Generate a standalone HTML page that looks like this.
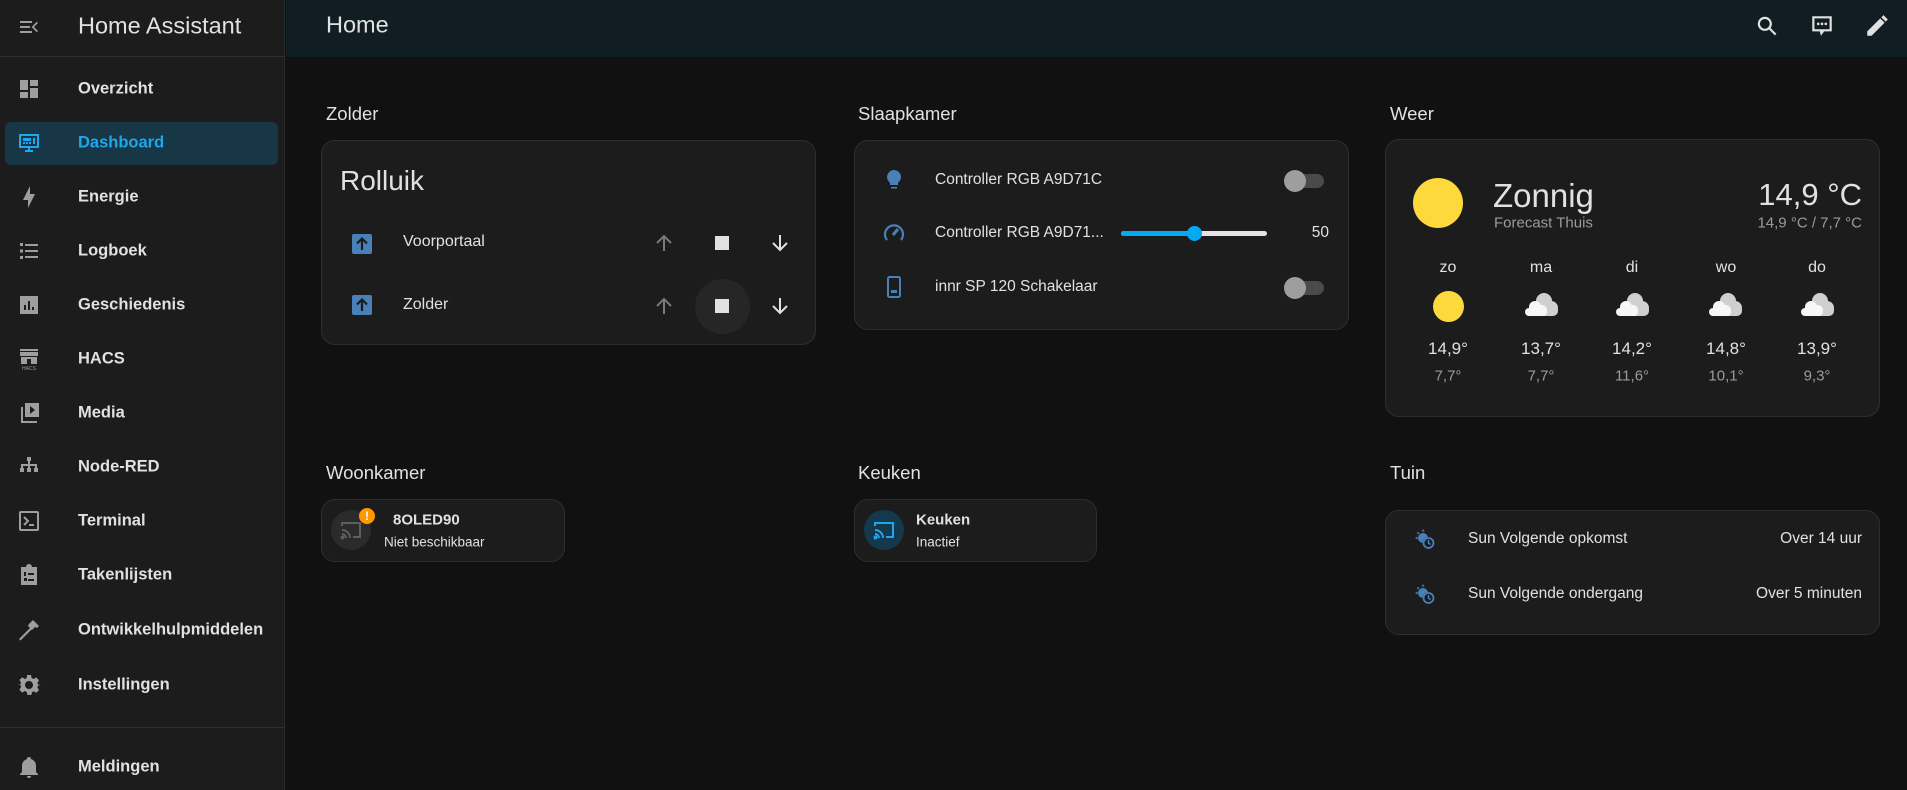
<!DOCTYPE html>
<html><head><meta charset="utf-8"><style>
*{box-sizing:border-box;margin:0;padding:0}
body{width:1907px;height:790px;background:#111;font-family:"Liberation Sans",sans-serif;color:#e1e1e1;position:relative;overflow:hidden}
.a{position:absolute}
.sb{left:0;top:0;width:285px;height:790px;background:#1c1c1c;border-right:1px solid #2a2a2a}
.nav{position:absolute;left:78px;font-size:16.5px;font-weight:bold;color:#e1e1e1;transform:translateY(-50%)}
.ni{position:absolute;left:17px;width:24px;height:24px;transform:translateY(-50%)}
.card{position:absolute;background:#1c1c1c;border:1px solid #2e2e2e;border-radius:14px}
.h{position:absolute;font-size:18.5px;color:#e1e1e1;transform:translateY(-50%)}
.t{position:absolute;transform:translateY(-50%);white-space:nowrap}
.c{transform:translate(-50%,-50%)}
</style></head><body>
<svg width="0" height="0" style="position:absolute"><defs><g id="cl"><circle cx="22" cy="11" r="8" fill="#cfcfcf"/><circle cx="29" cy="18" r="7" fill="#cfcfcf"/><rect x="14" y="15" width="22" height="11" rx="5" fill="#cfcfcf"/><circle cx="13" cy="17" r="6" fill="#f7f7f7"/><circle cx="20" cy="20" r="5" fill="#f7f7f7"/><rect x="3" y="18" width="22" height="8" rx="4" fill="#f7f7f7"/></g></defs></svg>
<div class="a sb"></div>
<div class="a" style="left:0;top:56px;width:285px;height:1px;background:#2f2f2f"></div>
<svg class="a" style="left:17px;top:15px" width="24" height="24" viewBox="0 0 24 24" fill="#9e9e9e"><path d="M3 6h12v2H3zM3 11h10v2H3zM3 16h12v2H3zM21 8l-4 4 4 4-1.2 1.2L14.6 12l5.2-5.2z"/></svg>
<div class="t" style="left:78px;top:26px;font-size:23.5px">Home Assistant</div>

<div class="a" style="left:5px;top:122px;width:273px;height:43px;background:#173646;border-radius:6px"></div>
<svg class="ni" style="top:89px" viewBox="0 0 24 24" fill="#9e9e9e"><path d="M3 3h8v10H3zM13 3h8v6h-8zM13 11h8v10h-8zM3 15h8v6H3z"/></svg>
<div class="nav" style="top:89px">Overzicht</div>
<svg class="ni" style="top:143px" viewBox="0 0 24 24" fill="#1ea6ee"><path d="M2 3h20v14H13v2h3v2H8v-2h3v-2H2zM4 5v10h16V5zM6 7h8v3H6zM16 7h2v6h-2zM6 11h2v2H6zM9 11h2v2H9zM12 11h2v2h-2z"/></svg>
<div class="nav" style="top:143px;color:#1ea6ee">Dashboard</div>
<svg class="ni" style="top:197px" viewBox="0 0 24 24" fill="#9e9e9e"><path d="M11 15H6l7-14v8h5l-7 14z"/></svg>
<div class="nav" style="top:197px">Energie</div>
<svg class="ni" style="top:251px" viewBox="0 0 24 24" fill="#9e9e9e"><path d="M3 4h3v3H3zM8 5h13v2H8zM3 10.5h3v3H3zM8 11h13v2H8zM3 17h3v3H3zM8 17h13v2H8z"/></svg>
<div class="nav" style="top:251px">Logboek</div>
<svg class="ni" style="top:305px" viewBox="0 0 24 24" fill="#9e9e9e"><path d="M3 3h18v18H3zM7 12v5h2v-5zM11 8v9h2V8zM15 14v3h2v-3z"/></svg>
<div class="nav" style="top:305px">Geschiedenis</div>
<svg class="ni" style="top:359px" viewBox="0 0 24 24" fill="#9e9e9e"><path d="M3 2h18v2H3zM3 5h18v4H3zM4 10h16v7h-6v-5h-4v5H4z"/><text x="12" y="23" font-size="5" text-anchor="middle" fill="#9e9e9e" font-family="Liberation Sans">HACS</text></svg>
<div class="nav" style="top:359px">HACS</div>
<svg class="ni" style="top:413px" viewBox="0 0 24 24" fill="#9e9e9e"><path d="M8 2h14v14H8zM13 5v8l5-4zM4 6h2v14h14v2H4z"/></svg>
<div class="nav" style="top:413px">Media</div>
<svg class="ni" style="top:467px" viewBox="0 0 24 24" fill="#9e9e9e"><path d="M10 2h4v4h-1v3h7v4h1v4h-4v-4h1v-2h-5v2h1v4h-4v-4h1v-2H6v2h1v4H3v-4h1V9h7V6h-1z"/></svg>
<div class="nav" style="top:467px">Node-RED</div>
<svg class="ni" style="top:521px" viewBox="0 0 24 24" fill="none" stroke="#9e9e9e" stroke-width="2"><rect x="3" y="3" width="18" height="18" rx="1"/><path d="M7 8l4 4-4 4M12 16h5"/></svg>
<div class="nav" style="top:521px">Terminal</div>
<svg class="ni" style="top:575px" viewBox="0 0 24 24" fill="#9e9e9e"><path d="M4 4h5a3 3 0 0 1 6 0h5v18H4z"/><path fill="#1c1c1c" d="M7 9h2v4H7zM11 10h6v2h-6zM7 15h3v3H7zM11 16h6v2h-6z"/></svg>
<div class="nav" style="top:575px">Takenlijsten</div>
<svg class="ni" style="top:630px" viewBox="0 0 24 24" fill="#9e9e9e"><path d="M2 21l11-11 1.5 1.5L3.5 22.5zM12 6l4-4 6 6-2 2-2-1-3 3-4-4z"/></svg>
<div class="nav" style="top:630px">Ontwikkelhulpmiddelen</div>
<svg class="ni" style="top:685px" viewBox="0 0 24 24" fill="#9e9e9e"><path d="M12 8a4 4 0 1 0 0 8 4 4 0 0 0 0-8zM10 2h4l.6 3 2 1 2.6-1.6 2.8 2.8L20.4 10l.6 1.5 3 .5v0l-3 .5-.6 2 1.6 2.6-2.8 2.8L17 18.4l-2 .6-.6 3h-4l-.6-3-2-1-2.6 1.6-2.8-2.8L4 14l-.6-2L0 12l3.4-.5.6-2L2.4 7 5.2 4.2 7.8 6l2-1z"/></svg>
<div class="nav" style="top:685px">Instellingen</div>
<div class="a" style="left:0;top:727px;width:285px;height:1px;background:#2f2f2f"></div>
<svg class="ni" style="top:767px" viewBox="0 0 24 24" fill="#9e9e9e"><path d="M12 2a2 2 0 0 1 2 2 7 7 0 0 1 5 7v6l2 2v1H3v-1l2-2v-6a7 7 0 0 1 5-7 2 2 0 0 1 2-2zM10 21h4a2 2 0 0 1-4 0z"/></svg>
<div class="nav" style="top:767px">Meldingen</div>

<!-- header -->
<div class="a" style="left:286px;top:0;width:1621px;height:57px;background:#101e24"></div>
<div class="t" style="left:326px;top:25px;font-size:23.5px">Home</div>
<svg class="a" style="left:1754px;top:13px" width="26" height="26" viewBox="0 0 24 24" fill="none" stroke="#e1e1e1" stroke-width="2"><circle cx="10" cy="10" r="5.5"/><path d="M14 14l6 6"/></svg>
<svg class="a" style="left:1809px;top:13px" width="26" height="26" viewBox="0 0 24 24" fill="#e1e1e1"><path d="M3 3h18v14h-7l-3 4-1-4H3zM5 5v10h14V5z"/><circle cx="8.5" cy="10" r="1.2"/><circle cx="12" cy="10" r="1.2"/><circle cx="15.5" cy="10" r="1.2"/></svg>
<svg class="a" style="left:1864px;top:13px" width="26" height="26" viewBox="0 0 24 24" fill="#e1e1e1"><path d="M3 21v-4L15 5l4 4L7 21zM16 4l2-2 4 4-2 2z"/></svg>

<!-- section titles -->
<div class="h" style="left:326px;top:114px">Zolder</div>
<div class="h" style="left:858px;top:114px">Slaapkamer</div>
<div class="h" style="left:1390px;top:114px">Weer</div>
<div class="h" style="left:326px;top:473px">Woonkamer</div>
<div class="h" style="left:858px;top:473px">Keuken</div>
<div class="h" style="left:1390px;top:473px">Tuin</div>

<!-- Zolder -->
<div class="card" style="left:321px;top:140px;width:495px;height:205px"></div>
<div class="t" style="left:340px;top:181px;font-size:28px">Rolluik</div>
<svg class="a" style="left:351px;top:233px" width="22" height="22" viewBox="0 0 22 22"><rect x="1" y="1" width="20" height="20" rx="2" fill="#4a80b8"/><path d="M11 17V6M6 10.5L11 5.5l5 5" stroke="#1c1c1c" stroke-width="2.2" fill="none"/></svg>
<svg class="a" style="left:351px;top:294px" width="22" height="22" viewBox="0 0 22 22"><rect x="1" y="1" width="20" height="20" rx="2" fill="#4a80b8"/><path d="M11 17V6M6 10.5L11 5.5l5 5" stroke="#1c1c1c" stroke-width="2.2" fill="none"/></svg>
<div class="t" style="left:403px;top:242px;font-size:16px">Voorportaal</div>
<div class="t" style="left:403px;top:305px;font-size:16px">Zolder</div>
<div class="a" style="left:695px;top:279px;width:55px;height:55px;border-radius:50%;background:#262626"></div>
<svg class="a" style="left:652px;top:232px" width="140" height="22" viewBox="0 0 140 22"><path d="M12 19V4M5 11l7-7 7 7" stroke="#7a7a7a" stroke-width="2" fill="none"/><rect x="63" y="4" width="14" height="14" fill="#e1e1e1"/><path d="M128 3v15M121 11l7 7 7-7" stroke="#e1e1e1" stroke-width="2" fill="none"/></svg>
<svg class="a" style="left:652px;top:295px" width="140" height="22" viewBox="0 0 140 22"><path d="M12 19V4M5 11l7-7 7 7" stroke="#7a7a7a" stroke-width="2" fill="none"/><rect x="63" y="4" width="14" height="14" fill="#e1e1e1"/><path d="M128 3v15M121 11l7 7 7-7" stroke="#e1e1e1" stroke-width="2" fill="none"/></svg>

<!-- Slaapkamer -->
<div class="card" style="left:854px;top:140px;width:495px;height:190px"></div>
<svg class="a" style="left:882px;top:168px" width="24" height="24" viewBox="0 0 24 24" fill="#4a80b8"><path d="M12 2a7 7 0 0 1 4 12.7V17H8v-2.3A7 7 0 0 1 12 2zM9 19h6v1.5H9z"/></svg>
<svg class="a" style="left:882px;top:221px" width="24" height="24" viewBox="0 0 24 24" fill="none" stroke="#4a80b8" stroke-width="2.2"><path d="M5 19A9 9 0 1 1 19 19"/><path d="M11 14l5-6" stroke-width="3"/></svg>
<svg class="a" style="left:882px;top:275px" width="24" height="24" viewBox="0 0 24 24"><rect x="6" y="2" width="12" height="20" rx="1.5" fill="none" stroke="#4a80b8" stroke-width="2"/><rect x="9" y="15" width="6" height="3" fill="#4a80b8"/></svg>
<div class="t" style="left:935px;top:180px;font-size:15.5px">Controller RGB A9D71C</div>
<div class="t" style="left:935px;top:233px;font-size:15.5px">Controller RGB A9D71...</div>
<div class="t" style="left:935px;top:287px;font-size:15.5px">innr SP 120 Schakelaar</div>
<div class="a" style="left:1290px;top:174px;width:34px;height:14px;border-radius:7px;background:#4a4a4a"></div>
<div class="a" style="left:1284px;top:170px;width:22px;height:22px;border-radius:50%;background:#9e9e9e"></div>
<div class="a" style="left:1290px;top:281px;width:34px;height:14px;border-radius:7px;background:#4a4a4a"></div>
<div class="a" style="left:1284px;top:277px;width:22px;height:22px;border-radius:50%;background:#9e9e9e"></div>
<div class="a" style="left:1121px;top:231px;width:146px;height:5px;border-radius:3px;background:#e6e1e6"></div>
<div class="a" style="left:1121px;top:231px;width:73px;height:5px;border-radius:3px;background:#03a9f4"></div>
<div class="a" style="left:1187px;top:226px;width:15px;height:15px;border-radius:50%;background:#03a9f4"></div>
<div class="t" style="right:578px;top:233px;font-size:15.5px">50</div>

<!-- Weer -->
<div class="card" style="left:1385px;top:139px;width:495px;height:278px"></div>
<div class="a" style="left:1413px;top:178px;width:50px;height:50px;border-radius:50%;background:#fdd93c"></div>
<div class="t" style="left:1493px;top:196px;font-size:33px">Zonnig</div>
<div class="t" style="left:1494px;top:223px;font-size:15px;color:#9b9b9b">Forecast Thuis</div>
<div class="t" style="right:45px;top:195px;font-size:31px">14,9 °C</div>
<div class="t" style="right:45px;top:223px;font-size:15px;color:#9b9b9b">14,9 °C / 7,7 °C</div>
<div class="t c" style="left:1448px;top:268px;font-size:16px">zo</div>
<div class="t c" style="left:1541px;top:268px;font-size:16px">ma</div>
<div class="t c" style="left:1632px;top:268px;font-size:16px">di</div>
<div class="t c" style="left:1726px;top:268px;font-size:16px">wo</div>
<div class="t c" style="left:1817px;top:268px;font-size:16px">do</div>
<div class="a" style="left:1433px;top:291px;width:31px;height:31px;border-radius:50%;background:#fdd93c"></div>
<svg class="a" style="left:1522px;top:290px" width="38" height="28" viewBox="0 0 38 28"><use href="#cl"/></svg>
<svg class="a" style="left:1613px;top:290px" width="38" height="28" viewBox="0 0 38 28"><use href="#cl"/></svg>
<svg class="a" style="left:1706px;top:290px" width="38" height="28" viewBox="0 0 38 28"><use href="#cl"/></svg>
<svg class="a" style="left:1798px;top:290px" width="38" height="28" viewBox="0 0 38 28"><use href="#cl"/></svg>
<div class="t c" style="left:1448px;top:349px;font-size:17px">14,9°</div>
<div class="t c" style="left:1541px;top:349px;font-size:17px">13,7°</div>
<div class="t c" style="left:1632px;top:349px;font-size:17px">14,2°</div>
<div class="t c" style="left:1726px;top:349px;font-size:17px">14,8°</div>
<div class="t c" style="left:1817px;top:349px;font-size:17px">13,9°</div>
<div class="t c" style="left:1448px;top:376px;font-size:15px;color:#9b9b9b">7,7°</div>
<div class="t c" style="left:1541px;top:376px;font-size:15px;color:#9b9b9b">7,7°</div>
<div class="t c" style="left:1632px;top:376px;font-size:15px;color:#9b9b9b">11,6°</div>
<div class="t c" style="left:1726px;top:376px;font-size:15px;color:#9b9b9b">10,1°</div>
<div class="t c" style="left:1817px;top:376px;font-size:15px;color:#9b9b9b">9,3°</div>

<!-- Woonkamer -->
<div class="card" style="left:321px;top:499px;width:244px;height:63px"></div>
<div class="a" style="left:331px;top:510px;width:40px;height:40px;border-radius:50%;background:#2b2b2b"></div>
<svg class="a" style="left:339px;top:518px" width="24" height="24" viewBox="0 0 24 24" fill="none" stroke="#5e5e5e" stroke-width="2"><path d="M3 8V5h18v14h-7M3 12a8 8 0 0 1 8 8M3 16a4 4 0 0 1 4 4"/><circle cx="3.5" cy="19.5" r="1" fill="#5e5e5e"/></svg>
<div class="a" style="left:359px;top:508px;width:16px;height:16px;border-radius:50%;background:#ff9800;color:#fff;font-size:12px;font-weight:bold;text-align:center;line-height:16px">!</div>
<div class="t" style="left:393px;top:520px;font-size:15px;font-weight:bold">8OLED90</div>
<div class="t" style="left:384px;top:542px;font-size:13.5px">Niet beschikbaar</div>

<!-- Keuken -->
<div class="card" style="left:854px;top:499px;width:243px;height:63px"></div>
<div class="a" style="left:864px;top:510px;width:40px;height:40px;border-radius:50%;background:#14384c"></div>
<svg class="a" style="left:872px;top:518px" width="24" height="24" viewBox="0 0 24 24" fill="none" stroke="#1ea6ee" stroke-width="2"><path d="M3 8V5h18v14h-7M3 12a8 8 0 0 1 8 8M3 16a4 4 0 0 1 4 4"/><circle cx="3.5" cy="19.5" r="1" fill="#1ea6ee"/></svg>
<div class="t" style="left:916px;top:520px;font-size:15px;font-weight:bold">Keuken</div>
<div class="t" style="left:916px;top:542px;font-size:13.5px">Inactief</div>

<!-- Tuin -->
<div class="card" style="left:1385px;top:510px;width:495px;height:125px"></div>
<svg class="a" style="left:1413px;top:527px" width="24" height="24" viewBox="0 0 24 24" fill="#4a80b8"><circle cx="10" cy="11" r="5"/><path d="M10 2l1.5 2.5h-3zM2 11l2.5-1.5v3zM4 5l2.8.8-2 2z"/><circle cx="15.5" cy="16" r="6" fill="#1c1c1c"/><circle cx="15.5" cy="16" r="5" fill="none" stroke="#4a80b8" stroke-width="1.8"/><path d="M15.5 13v3l2 1.5" stroke="#4a80b8" stroke-width="1.5" fill="none"/></svg>
<svg class="a" style="left:1413px;top:582px" width="24" height="24" viewBox="0 0 24 24" fill="#4a80b8"><circle cx="10" cy="11" r="5"/><path d="M10 2l1.5 2.5h-3zM2 11l2.5-1.5v3zM4 5l2.8.8-2 2z"/><circle cx="15.5" cy="16" r="6" fill="#1c1c1c"/><circle cx="15.5" cy="16" r="5" fill="none" stroke="#4a80b8" stroke-width="1.8"/><path d="M15.5 13v3l2 1.5" stroke="#4a80b8" stroke-width="1.5" fill="none"/></svg>
<div class="t" style="left:1468px;top:539px;font-size:15.5px">Sun Volgende opkomst</div>
<div class="t" style="left:1468px;top:594px;font-size:15.5px">Sun Volgende ondergang</div>
<div class="t" style="right:45px;top:539px;font-size:15.5px">Over 14 uur</div>
<div class="t" style="right:45px;top:594px;font-size:15.5px">Over 5 minuten</div>
</body></html>
